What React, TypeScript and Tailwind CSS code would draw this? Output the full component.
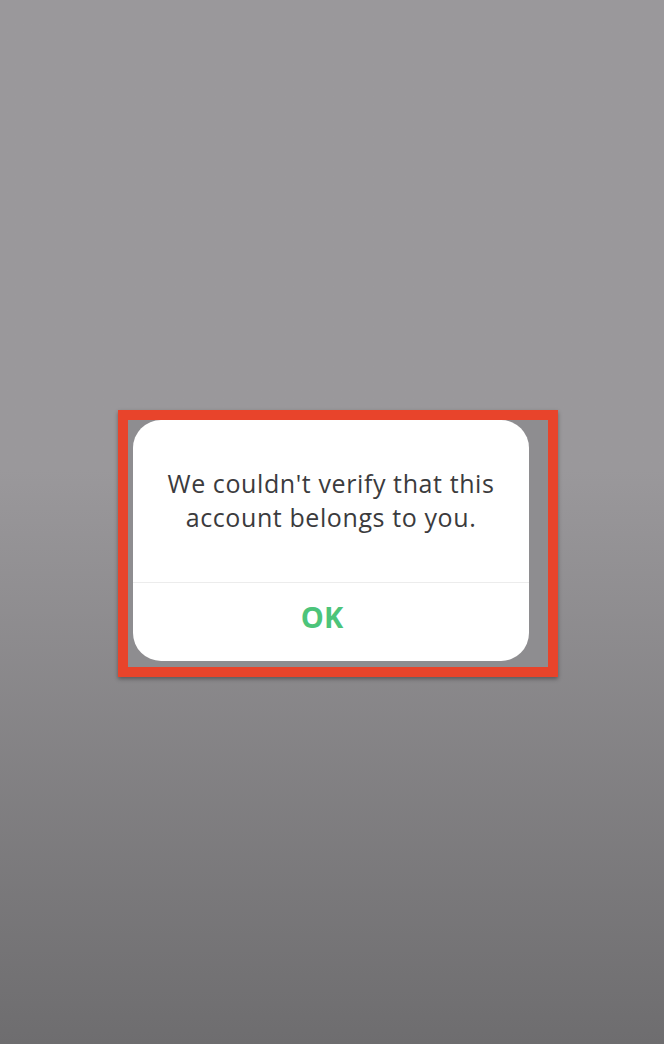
export default function App() {
  return (
    <div className="flex h-[1044px] w-full flex-col bg-gradient-to-b from-[#9a989b] from-45% to-[#6e6d6f] pt-[410px] font-['Open_Sans',sans-serif]">
      <div className="ml-[118px] h-[267px] w-[440px] border-[10px] border-[#e8442b] bg-[#8e8d90] pl-[5px] shadow-[0_2px_4px_rgba(0,0,0,0.35)]">
        <div className="flex h-[241px] w-[396px] flex-col rounded-[28px] bg-white">
          <div className="flex h-[162px] flex-col items-center pt-[46px] text-center text-[25px] leading-[34px] tracking-[0.6px] text-[#3b3b3d]">
            <p>We couldn't verify that this</p>
            <p>account belongs to you.</p>
          </div>
          <div className="h-px bg-[#ececec]" />
          <button className="flex h-[78px] items-center justify-center pb-[10px] pr-[18px] text-[29px] font-bold text-[#4cc47a]">
            OK
          </button>
        </div>
      </div>
    </div>
  );
}
